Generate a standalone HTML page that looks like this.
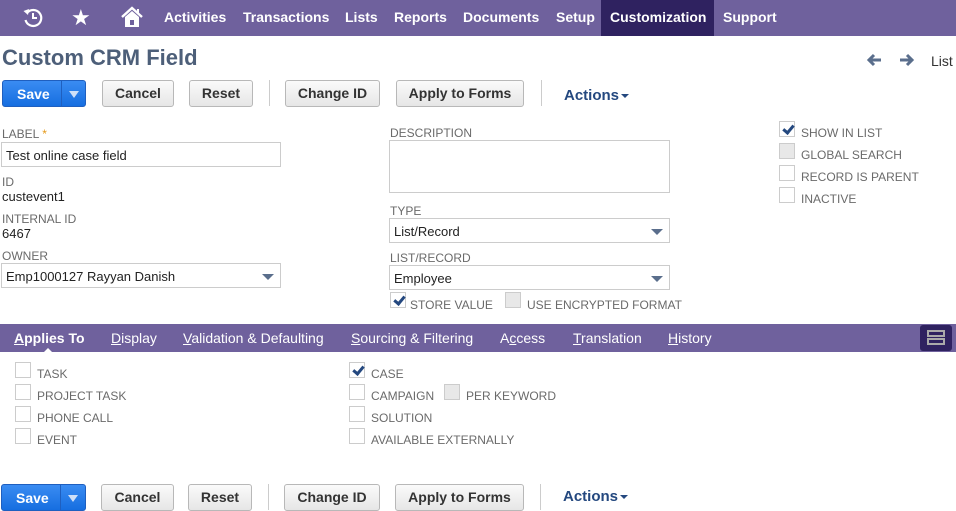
<!DOCTYPE html>
<html><head><style>
*{box-sizing:border-box;margin:0;padding:0}
body{width:956px;height:511px;overflow:hidden;background:#fff;font-family:"Liberation Sans",Arial,sans-serif;position:relative}
.a{position:absolute}
.nav{left:0;top:0;width:956px;height:36px;background:#6f619d}
.nav span{position:absolute;top:9px;color:#fff;font-weight:bold;font-size:14px}
.btn{position:absolute;height:27px;border:1px solid #b8b8b8;border-radius:3px;background:linear-gradient(#fafafa,#e6e6e6);font-weight:bold;font-size:14px;color:#333;text-align:center;line-height:25px}
.save{position:absolute;height:27px;border:1px solid #1f5fbf;border-radius:3px;background:linear-gradient(#3a8cf2,#166ee0);color:#fff;font-weight:bold;font-size:14px}
.sep{position:absolute;width:1px;height:26px;background:#ccc}
.lbl{position:absolute;font-size:12px;color:#6a6a6a}
.val{position:absolute;font-size:13px;color:#222}
.inp{position:absolute;border:1px solid #ccc;background:#fff;font-size:13px;color:#222;padding:5px 4px 0}
.tri{position:absolute;right:6px;top:10px;width:0;height:0;border-left:6px solid transparent;border-right:6px solid transparent;border-top:6px solid #5a6e8c}
.cb{position:absolute;width:16px;height:16px;border:1px solid #ccc;background:#fff}
.cb.g{background:#e8e8e8}
.cb.k::after{content:"";position:absolute;left:5px;top:1px;width:4px;height:8px;border:solid #24487f;border-width:0 3px 3px 0;transform:rotate(40deg)}
.tabs{left:0;top:324px;width:956px;height:28px;background:#6f619d}
.tabs span{position:absolute;top:6px;color:#fff;font-size:14px}
.act{position:absolute;color:#24487f;font-weight:bold;font-size:15px}
.dd{position:absolute;left:66px;top:10px;width:0;height:0;border-left:5px solid transparent;border-right:5px solid transparent;border-top:7px solid #cfe0f8}
.at{display:inline-block;width:0;height:0;border-left:4px solid transparent;border-right:4px solid transparent;border-top:4px solid #24487f;vertical-align:middle;margin-left:2px}
</style></head><body>
<div class="a nav">
<svg class="a" style="left:22px;top:7px" width="22" height="22" viewBox="0 0 22 22"><path d="M5 6 A8 8 0 1 1 3.5 13" fill="none" stroke="#fff" stroke-width="2.2"/><path d="M1.5 4 L6 8 L7 2 Z" fill="#fff"/><path d="M11 6v5h4" fill="none" stroke="#fff" stroke-width="2"/></svg>
<span style="left:71px;top:5px;font-size:22px;font-weight:normal">★</span>
<svg class="a" style="left:120px;top:6px" width="24" height="22" viewBox="0 0 24 22"><path d="M2 11 L12 2 L22 11" fill="none" stroke="#fff" stroke-width="2.4"/><path d="M5 11v10h14V11L12 5z" fill="#fff"/><rect x="10" y="14" width="4" height="5" fill="#6f619d"/><rect x="17" y="3" width="2" height="5" fill="#fff"/></svg>
<span style="left:164px">Activities</span>
<span style="left:243px">Transactions</span>
<span style="left:345px">Lists</span>
<span style="left:394px">Reports</span>
<span style="left:463px">Documents</span>
<span style="left:556px">Setup</span>
<div class="a" style="left:601px;top:0;width:113px;height:36px;background:#2f2260"></div>
<span style="left:610px">Customization</span>
<span style="left:723px">Support</span>
</div>
<div class="a" style="left:2px;top:45px;font-size:22px;font-weight:bold;color:#4d5f79">Custom CRM Field</div>
<svg class="a" style="left:866px;top:53px" width="16" height="14" viewBox="0 0 16 14"><path d="M15 7H4M8 2L3 7l5 5" fill="none" stroke="#5a6e8c" stroke-width="3"/></svg>
<svg class="a" style="left:899px;top:53px" width="16" height="14" viewBox="0 0 16 14"><path d="M1 7h11M8 2l5 5-5 5" fill="none" stroke="#5a6e8c" stroke-width="3"/></svg>
<div class="a" style="left:931px;top:53px;font-size:14px;color:#333">List</div>

<div class="save" style="left:2px;top:80px;width:84px"><span class="a" style="left:14px;top:5px">Save</span><div class="a" style="left:58px;top:0;width:1px;height:25px;background:#1f5fbf"></div><div class="dd"></div></div>
<div class="btn" style="left:102px;top:80px;width:72px">Cancel</div>
<div class="btn" style="left:189px;top:80px;width:64px">Reset</div>
<div class="sep" style="left:269px;top:80px"></div>
<div class="btn" style="left:285px;top:80px;width:95px">Change ID</div>
<div class="btn" style="left:396px;top:80px;width:128px">Apply to Forms</div>
<div class="sep" style="left:541px;top:80px"></div>
<div class="act" style="left:564px;top:87px">Actions<span class="at"></span></div>

<div class="lbl" style="left:2px;top:127px">LABEL <span style="color:#e59a1a">*</span></div>
<div class="inp" style="left:1px;top:142px;width:280px;height:25px">Test online case field</div>
<div class="lbl" style="left:2px;top:175px">ID</div>
<div class="val" style="left:2px;top:189px">custevent1</div>
<div class="lbl" style="left:2px;top:212px">INTERNAL ID</div>
<div class="val" style="left:2px;top:226px">6467</div>
<div class="lbl" style="left:2px;top:249px">OWNER</div>
<div class="inp" style="left:1px;top:263px;width:280px;height:25px">Emp1000127 Rayyan Danish<div class="tri"></div></div>

<div class="lbl" style="left:390px;top:126px">DESCRIPTION</div>
<div class="inp" style="left:389px;top:140px;width:281px;height:53px"></div>
<div class="lbl" style="left:390px;top:204px">TYPE</div>
<div class="inp" style="left:389px;top:218px;width:281px;height:25px">List/Record<div class="tri"></div></div>
<div class="lbl" style="left:390px;top:251px">LIST/RECORD</div>
<div class="inp" style="left:389px;top:265px;width:281px;height:25px">Employee<div class="tri"></div></div>
<div class="cb k" style="left:390px;top:292px"></div><div class="lbl" style="left:410px;top:298px">STORE VALUE</div>
<div class="cb g" style="left:505px;top:292px"></div><div class="lbl" style="left:527px;top:298px">USE ENCRYPTED FORMAT</div>

<div class="cb k" style="left:779px;top:121px"></div><div class="lbl" style="left:801px;top:126px">SHOW IN LIST</div>
<div class="cb g" style="left:779px;top:143px"></div><div class="lbl" style="left:801px;top:148px">GLOBAL SEARCH</div>
<div class="cb" style="left:779px;top:165px"></div><div class="lbl" style="left:801px;top:170px">RECORD IS PARENT</div>
<div class="cb" style="left:779px;top:187px"></div><div class="lbl" style="left:801px;top:192px">INACTIVE</div>

<div class="a tabs">
<span style="left:14px;font-weight:bold"><u>A</u>pplies To</span>
<span style="left:111px"><u>D</u>isplay</span>
<span style="left:183px"><u>V</u>alidation &amp; Defaulting</span>
<span style="left:351px"><u>S</u>ourcing &amp; Filtering</span>
<span style="left:500px">A<u>c</u>cess</span>
<span style="left:573px"><u>T</u>ranslation</span>
<span style="left:668px"><u>H</u>istory</span>
<div class="a" style="left:920px;top:1px;width:32px;height:26px;background:#2f2260;border-radius:3px"><div class="a" style="left:7px;top:5px;width:18px;height:7px;border:2px solid #aaa"></div><div class="a" style="left:7px;top:13px;width:18px;height:7px;border:2px solid #aaa"></div></div>
</div>
<div class="a" style="left:43px;top:348px;width:0;height:0;border-left:5px solid transparent;border-right:5px solid transparent;border-bottom:5px solid #fff"></div>

<div class="cb" style="left:15px;top:362px"></div><div class="lbl" style="left:37px;top:367px">TASK</div>
<div class="cb" style="left:15px;top:384px"></div><div class="lbl" style="left:37px;top:389px">PROJECT TASK</div>
<div class="cb" style="left:15px;top:406px"></div><div class="lbl" style="left:37px;top:411px">PHONE CALL</div>
<div class="cb" style="left:15px;top:428px"></div><div class="lbl" style="left:37px;top:433px">EVENT</div>
<div class="cb k" style="left:349px;top:362px"></div><div class="lbl" style="left:371px;top:367px">CASE</div>
<div class="cb" style="left:349px;top:384px"></div><div class="lbl" style="left:371px;top:389px">CAMPAIGN</div>
<div class="cb g" style="left:444px;top:384px"></div><div class="lbl" style="left:466px;top:389px">PER KEYWORD</div>
<div class="cb" style="left:349px;top:406px"></div><div class="lbl" style="left:371px;top:411px">SOLUTION</div>
<div class="cb" style="left:349px;top:428px"></div><div class="lbl" style="left:371px;top:433px">AVAILABLE EXTERNALLY</div>

<div class="save" style="left:1px;top:484px;width:85px"><span class="a" style="left:14px;top:5px">Save</span><div class="a" style="left:58px;top:0;width:1px;height:25px;background:#1f5fbf"></div><div class="dd"></div></div>
<div class="btn" style="left:101px;top:484px;width:73px">Cancel</div>
<div class="btn" style="left:188px;top:484px;width:64px">Reset</div>
<div class="sep" style="left:268px;top:484px"></div>
<div class="btn" style="left:284px;top:484px;width:96px">Change ID</div>
<div class="btn" style="left:395px;top:484px;width:129px">Apply to Forms</div>
<div class="sep" style="left:540px;top:484px"></div>
<div class="act" style="left:563px;top:488px">Actions<span class="at"></span></div>
</body></html>
